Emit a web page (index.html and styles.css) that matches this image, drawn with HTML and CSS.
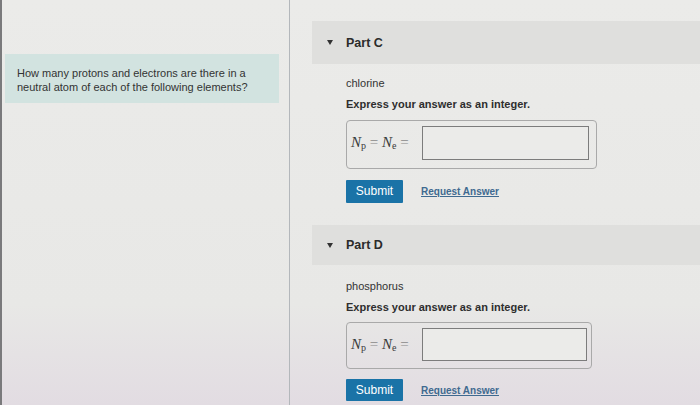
FILE: index.html
```html
<!DOCTYPE html>
<html>
<head>
<meta charset="utf-8">
<link rel="stylesheet" href="styles.css">
</head>
<body>
<div class="page">
  <aside class="left">
    <div class="question">How many protons and electrons are there in a neutral atom of each of the following elements?</div>
  </aside>
  <main class="right">
    <section class="part">
      <div class="part-head"><span class="caret"></span><span class="part-title">Part C</span></div>
      <div class="part-body">
        <p class="element">chlorine</p>
        <p class="instr">Express your answer as an integer.</p>
        <div class="answer">
          <span class="math"><i>N</i><sub>p</sub> <span class="eq">=</span> <i>N</i><sub>e</sub> <span class="eq">=</span></span>
          <span class="input"></span>
        </div>
        <div class="actions">
          <span class="submit">Submit</span>
          <span class="req">Request Answer</span>
        </div>
      </div>
    </section>
    <section class="part part-d">
      <div class="part-head"><span class="caret"></span><span class="part-title">Part D</span></div>
      <div class="part-body">
        <p class="element">phosphorus</p>
        <p class="instr">Express your answer as an integer.</p>
        <div class="answer answer-d">
          <span class="math"><i>N</i><sub>p</sub> <span class="eq">=</span> <i>N</i><sub>e</sub> <span class="eq">=</span></span>
          <span class="input"></span>
        </div>
        <div class="actions">
          <span class="submit">Submit</span>
          <span class="req">Request Answer</span>
        </div>
      </div>
    </section>
  </main>
</div>
</body>
</html>
```

FILE: styles.css
```css
html, body {
  margin: 0;
  padding: 0;
}
body {
  width: 700px;
  height: 405px;
  overflow: hidden;
  background: #e9e9e7;
  font-family: "Liberation Sans", Arial, sans-serif;
  color: #2e2e2e;
}
.page {
  display: flex;
  height: 405px;
  border-left: 2px solid #7a7a7c;
  box-sizing: border-box;
  background: linear-gradient(180deg, #ebebe9 0%, #e8e8e6 75%, #e2dce2 100%);
}
.left {
  width: 288px;
  flex: none;
  border-right: 1px solid #b3b7bb;
  padding: 54px 0 0 3px;
  box-sizing: border-box;
}
.question {
  width: 274px;
  height: 49px;
  box-sizing: border-box;
  background: #d2e3e0;
  padding: 12px 0 0 12px;
  font-size: 11px;
  line-height: 14px;
  color: #333;
}
.right {
  flex: 1;
  padding: 21px 0 0 22px;
  box-sizing: border-box;
}
.part-head {
  height: 43px;
  background: #dfdfdd;
  display: flex;
  align-items: center;
  padding-left: 15px;
}
.caret {
  width: 0;
  height: 0;
  border-left: 3.5px solid transparent;
  border-right: 3.5px solid transparent;
  border-top: 5px solid #333;
  margin-right: 13px;
}
.part-title {
  font-size: 12.5px;
  font-weight: bold;
  color: #2b2b2b;
}
.part-body {
  padding-left: 34px;
}
.element {
  margin: 12px 0 0;
  font-size: 11px;
  line-height: 14px;
  color: #333;
}
.instr {
  margin: 7px 0 0;
  font-size: 11px;
  line-height: 14px;
  font-weight: bold;
  color: #2e2e2e;
}
.answer {
  margin-top: 9px;
  width: 251px;
  height: 49px;
  box-sizing: border-box;
  border: 1px solid #a9a9a9;
  border-radius: 4px;
  display: flex;
  align-items: flex-start;
  padding: 5px 0 0 4px;
}
.answer-d {
  width: 246px;
  height: 47px;
}
.math {
  font-family: "Liberation Serif", "Times New Roman", serif;
  font-size: 15px;
  color: #3a3a3a;
  width: 71px;
  flex: none;
  padding-top: 8px;
  white-space: nowrap;
}
.math sub {
  font-style: normal;
  font-size: 10px;
  vertical-align: -2px;
  line-height: 0;
}
.eq {
  color: #8a8a8a;
}
.input {
  width: 167px;
  height: 34px;
  box-sizing: border-box;
  border: 1px solid #7c7c7c;
  background: #ebebe9;
}
.answer-d .input {
  width: 165px;
  height: 33px;
}
.actions {
  margin-top: 11px;
  display: flex;
  align-items: center;
}
.submit {
  width: 57px;
  height: 23px;
  background: #1a73a7;
  color: #fff;
  font-size: 12px;
  line-height: 23px;
  text-align: center;
  border-radius: 1px;
  margin-right: 18px;
}
.req {
  font-size: 10px;
  font-weight: bold;
  color: #3f6a90;
  text-decoration: underline;
}
.part-d {
  margin-top: 22px;
}
.part-d .part-head {
  height: 40px;
}
.part-d .element {
  margin-top: 14px;
}
.part-d .instr {
  margin-top: 7px;
}
.part-d .answer {
  margin-top: 8px;
}
.part-d .actions {
  margin-top: 10px;
}
.part-d .submit {
  height: 22px;
  line-height: 22px;
}
```
